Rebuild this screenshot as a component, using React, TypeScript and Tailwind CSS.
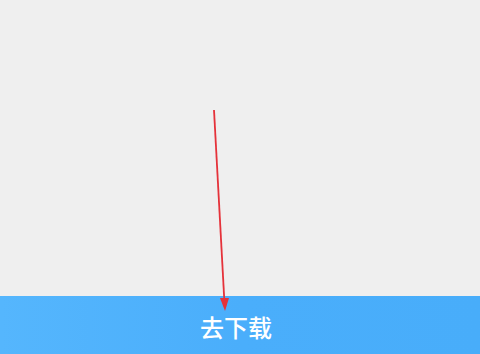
export default function App() {
  return (
    <div className="relative flex h-[354px] w-[480px] flex-col overflow-hidden bg-[#efefef] font-['Noto_Sans_CJK_SC',sans-serif]">
      <div className="flex-1" />
      <div className="flex h-[58px] items-start justify-center bg-gradient-to-r from-[#55b6fd] via-[#4aaefb] to-[#48adfa] pt-[16px]">
        <span className="ml-[-8px] text-[24px] font-medium leading-[30px] text-white">去下载</span>
      </div>
      <svg className="absolute left-0 top-0" width="480" height="354" viewBox="0 0 480 354">
        <line x1="214" y1="110" x2="224.3" y2="300" stroke="#e5323a" strokeWidth="1.8" />
        <polygon points="220,298 229,298 225,311" fill="#e5323a" />
      </svg>
    </div>
  );
}
